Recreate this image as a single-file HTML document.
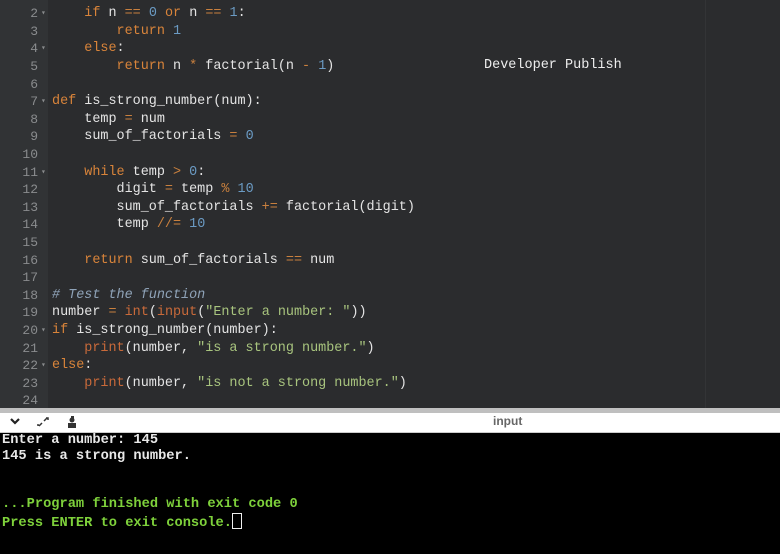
<!DOCTYPE html>
<html><head><style>
html,body{margin:0;padding:0;width:780px;height:554px;overflow:hidden;background:#000}
#ed{position:absolute;left:0;top:0;width:780px;height:408px;background:#2b2c2e;overflow:hidden}
#gut{position:absolute;left:0;top:0;width:48px;height:408px;background:#313335}
.pm{position:absolute;left:705px;top:0;width:1px;height:408px;background:#333436}
#lines{position:absolute;left:0;top:-12.4px;font:13.45px/17.6px "Liberation Mono",monospace;color:#e4e4e4;white-space:pre}
.ln{position:absolute;left:0;width:38px;text-align:right;color:#8a8c8e;font-size:13px}
.fd{position:absolute;left:41px;color:#8a8c8e;font-size:8px}
.cd{position:absolute;left:52px}
.k{color:#d9843a}.n{color:#6b9bc4}.o{color:#c9803e}.s{color:#a8c47e}.c{color:#8fa3b8;font-style:italic}.b{color:#c96a3a}
#dp{position:absolute;left:484px;top:58px;font:13.5px "Liberation Mono",monospace;color:#eee;white-space:pre}
#sep{position:absolute;left:0;top:408px;width:780px;height:5px;background:#bfbfbf}
#tb{position:absolute;left:0;top:413px;width:780px;height:19px;background:#fff;border-bottom:1px solid #ccc}
#tb .lbl{position:absolute;left:493px;top:1px;font:bold 12px "Liberation Sans",sans-serif;color:#666}
#con{position:absolute;left:2px;top:433px;font:bold 13.7px/16px "Liberation Mono",monospace;color:#e8e8e8;white-space:pre}
.g{color:#7ed13b}
.cur{display:inline-block;width:8px;height:14px;border:1px solid #eee;vertical-align:-3px}
</style></head><body>
<div id="ed"><div id="gut"></div><div class="pm"></div>
<div id="lines"></div>
<div id="dp">Developer Publish</div>
</div>
<div id="sep"></div>
<div id="tb">
<svg width="70" height="19" style="position:absolute;left:0;top:0">
<path d="M11 6l4 4 4-4" stroke="#222" stroke-width="2.2" fill="none"/>
<path d="M39 13l3-3M47 5l-3 3M46 5h2v2M38 13v-2" stroke="#333" stroke-width="1.5" fill="none"/>
</svg>
<svg width="12" height="19" style="position:absolute;left:66px;top:0"><circle cx="6" cy="7" r="2.5" fill="#333"/><rect x="2" y="10" width="8" height="5" fill="#333"/><rect x="5" y="3" width="3" height="3" fill="#333"/></svg>
<div class="lbl">input</div></div>
<div id="con">Enter a number: 145
145 is a strong number.


<span class="g">...Program finished with exit code 0
Press ENTER to exit console.</span><span class="cur"></span></div>
<script>
var L=[
['1','',''],
['2','▾','    <span class="k">if</span> n <span class="o">==</span> <span class="n">0</span> <span class="k">or</span> n <span class="o">==</span> <span class="n">1</span>:'],
['3','','        <span class="k">return</span> <span class="n">1</span>'],
['4','▾','    <span class="k">else</span>:'],
['5','','        <span class="k">return</span> n <span class="o">*</span> factorial(n <span class="o">-</span> <span class="n">1</span>)'],
['6','',''],
['7','▾','<span class="k">def</span> is_strong_number(num):'],
['8','','    temp <span class="o">=</span> num'],
['9','','    sum_of_factorials <span class="o">=</span> <span class="n">0</span>'],
['10','',''],
['11','▾','    <span class="k">while</span> temp <span class="o">&gt;</span> <span class="n">0</span>:'],
['12','','        digit <span class="o">=</span> temp <span class="o">%</span> <span class="n">10</span>'],
['13','','        sum_of_factorials <span class="o">+=</span> factorial(digit)'],
['14','','        temp <span class="o">//=</span> <span class="n">10</span>'],
['15','',''],
['16','','    <span class="k">return</span> sum_of_factorials <span class="o">==</span> num'],
['17','',''],
['18','','<span class="c"># Test the function</span>'],
['19','','number <span class="o">=</span> <span class="b">int</span>(<span class="b">input</span>(<span class="s">"Enter a number: "</span>))'],
['20','▾','<span class="k">if</span> is_strong_number(number):'],
['21','','    <span class="b">print</span>(number, <span class="s">"is a strong number."</span>)'],
['22','▾','<span class="k">else</span>:'],
['23','','    <span class="b">print</span>(number, <span class="s">"is not a strong number."</span>)'],
['24','','']];
var h='';L.forEach(function(l,i){var t=i*17.6;
h+='<div class="ln" style="top:'+t+'px">'+l[0]+'</div>';
if(l[1])h+='<div class="fd" style="top:'+t+'px">'+l[1]+'</div>';
h+='<div class="cd" style="top:'+t+'px">'+l[2]+'</div>';});
document.getElementById('lines').innerHTML=h;
</script>
</body></html>
